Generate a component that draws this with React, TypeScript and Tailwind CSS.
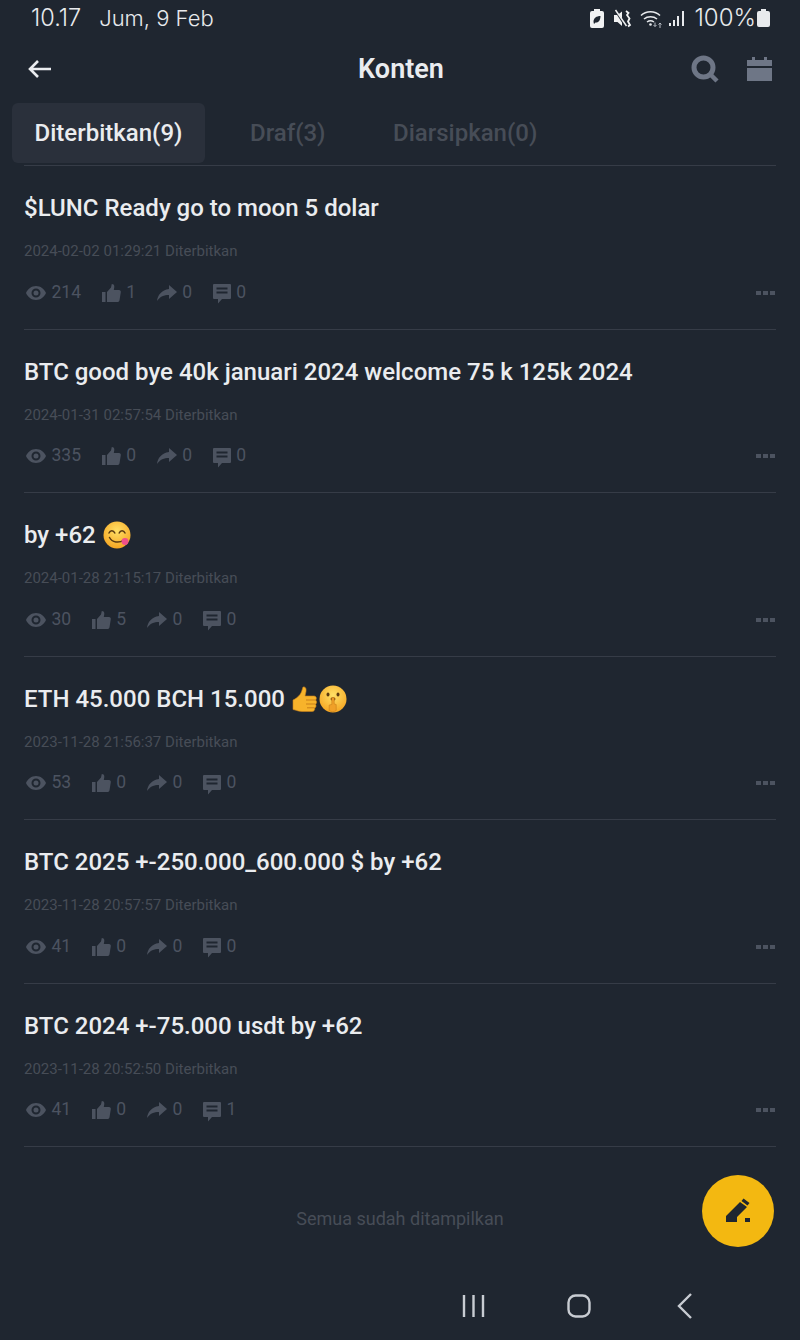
const posts = [
  { title: '$LUNC Ready go to moon 5 dolar', date: '2024-02-02 01:29:21', views: 214, likes: 1, shares: 0, comments: 0 },
  { title: 'BTC good bye 40k januari 2024 welcome 75 k 125k 2024', date: '2024-01-31 02:57:54', views: 335, likes: 0, shares: 0, comments: 0 },
  { title: 'by +62', emoji: 'yum', date: '2024-01-28 21:15:17', views: 30, likes: 5, shares: 0, comments: 0 },
  { title: 'ETH 45.000 BCH 15.000', emoji: 'thumb', date: '2023-11-28 21:56:37', views: 53, likes: 0, shares: 0, comments: 0 },
  { title: 'BTC 2025 +-250.000_600.000 $ by +62', date: '2023-11-28 20:57:57', views: 41, likes: 0, shares: 0, comments: 0 },
  { title: 'BTC 2024 +-75.000 usdt by +62', date: '2023-11-28 20:52:50', views: 41, likes: 0, shares: 0, comments: 1 },
]

function YumEmoji() {
  return (
    <svg width="28" height="28" viewBox="0 0 28 28">
      <defs>
        <radialGradient id="yumFace" cx="50%" cy="35%" r="65%">
          <stop offset="0%" stopColor="#ffe066" />
          <stop offset="100%" stopColor="#f5a623" />
        </radialGradient>
      </defs>
      <circle cx="14" cy="14" r="13.500" fill="url(#yumFace)" />
      <path d="M6 12c1.200-3 4.500-3 5.800 0M16.200 12c1.200-3 4.500-3 5.800 0" fill="none" stroke="#5b3a10" strokeWidth="1.500" strokeLinecap="round" />
      <path d="M6.500 16.500c2.500 5 9.500 6 14.500 2.500" fill="none" stroke="#5b3a10" strokeWidth="1.500" strokeLinecap="round" />
      <circle cx="22" cy="20.500" r="3.400" fill="#f0508a" />
    </svg>
  )
}

function ThumbEmoji() {
  return (
    <svg width="27" height="28" viewBox="0 0 27 28">
      <path d="M1 15c2.500-1 5-3 7-5.500 1.500-2 2-4.500 3-7.500 2.500-.5 3.500 1.500 3 4.500L13 11h9c2.500 0 3 3 1.500 4 1.500 1 1.500 3.500 0 4.200 1 1.300.6 3.400-.9 3.800.6 1.500-.4 3.500-2.600 3.500H10c-3 0-5-1-7-1.500L1 24.500z" fill="#f7b32b" stroke="#c9801a" strokeWidth=".6" />
      <path d="M14 15h9.500M14 19h9.500M15 22.800h7.500" stroke="#c9801a" strokeWidth="1" />
    </svg>
  )
}

function ShushEmoji() {
  return (
    <svg width="28" height="28" viewBox="0 0 28 28">
      <defs>
        <radialGradient id="shushFace" cx="50%" cy="35%" r="65%">
          <stop offset="0%" stopColor="#ffe066" />
          <stop offset="100%" stopColor="#f5a623" />
        </radialGradient>
      </defs>
      <circle cx="14" cy="14" r="13.500" fill="url(#shushFace)" />
      <ellipse cx="9" cy="9.500" rx="1.500" ry="2" fill="#5b3a10" />
      <ellipse cx="19" cy="9.500" rx="1.500" ry="2" fill="#5b3a10" />
      <ellipse cx="14" cy="14" rx="2.500" ry="1.800" fill="#7a3f12" />
      <path d="M12.800 13.500c0-1.300 2.400-1.300 2.400 0V19l2 .5V25.500c-2 1.500-5 1.500-7 0V20l2.600-.5z" fill="#f0a028" stroke="#c9801a" strokeWidth=".6" />
    </svg>
  )
}

function EyeIcon() {
  return (
    <svg width="20" height="14" viewBox="0 0 20 14" fill="#4c5360">
      <path fillRule="evenodd" d="M10 0c4.500 0 8.200 2.800 10 7-1.800 4.200-5.500 7-10 7S1.800 11.200 0 7c1.800-4.200 5.500-7 10-7zm0 2.500a4.500 4.500 0 100 9 4.500 4.500 0 000-9z" />
      <circle cx="10" cy="7" r="2.500" />
    </svg>
  )
}

function LikeIcon() {
  return (
    <svg width="19" height="18" viewBox="0 0 19 18" fill="#4c5360">
      <path d="M0 8h3.500v10H0zM5 8l4-4.500L9.800 0c1.800 0 2.700 1.200 2.500 3L11.800 6H17c1.300 0 2 1 1.800 2.200l-1.300 8c-.2 1-1 1.800-2 1.800H5z" />
    </svg>
  )
}

function ShareIcon() {
  return (
    <svg width="20" height="16" viewBox="0 0 20 16" fill="#4c5360">
      <path d="M12 0l8 7-8 7v-4C7 10 3 11.500 0 16c.8-6 4.500-11 12-12z" />
    </svg>
  )
}

function CommentIcon() {
  return (
    <svg width="18" height="20" viewBox="0 0 18 20" fill="#4c5360" className="mt-[3px]">
      <path fillRule="evenodd" d="M1 0h16a1 1 0 011 1v13a1 1 0 01-1 1H9l-4 4.500V15H1a1 1 0 01-1-1V1a1 1 0 011-1zm2.500 3.500v2h11v-2zm0 4v2h11v-2z" />
    </svg>
  )
}

function Stat({ icon, value }: { icon: React.ReactNode; value: number }) {
  return (
    <div className="flex items-center gap-[5.5px]">
      {icon}
      <span className="text-[17.5px] leading-none text-[#4c5360]">{value}</span>
    </div>
  )
}

function PostRow({ post }: { post: (typeof posts)[number] }) {
  return (
    <article className="h-[163.5px] border-b border-[#363c47] pt-[26px]">
      <div className="flex h-[32px] items-center text-[24px] font-medium leading-[32px] text-[#eaecef]">
        <span>{post.title}</span>
        {post.emoji === 'yum' && (
          <span className="ml-[7px] flex">
            <YumEmoji />
          </span>
        )}
        {post.emoji === 'thumb' && (
          <span className="ml-[7px] flex">
            <ThumbEmoji />
            <ShushEmoji />
          </span>
        )}
      </div>
      <p className="mt-[17px] text-[15px] leading-[20px] text-[#474d57]">{post.date} Diterbitkan</p>
      <div className="mt-[20.5px] flex h-[22px] items-center justify-between pl-[2px] pr-[1px]">
        <div className="flex items-center gap-[20.7px]">
          <Stat icon={<EyeIcon />} value={post.views} />
          <Stat icon={<LikeIcon />} value={post.likes} />
          <Stat icon={<ShareIcon />} value={post.shares} />
          <Stat icon={<CommentIcon />} value={post.comments} />
        </div>
        <div className="flex gap-[2px]">
          <span className="h-[4px] w-[5px] bg-[#4c5360]" />
          <span className="h-[4px] w-[5px] bg-[#4c5360]" />
          <span className="h-[4px] w-[5px] bg-[#4c5360]" />
        </div>
      </div>
    </article>
  )
}

export default function App() {
  return (
    <div className="relative h-[1340px] w-[800px] overflow-hidden bg-[#1f2630] font-['Roboto',sans-serif]">
      {/* status bar */}
      <div className="flex h-[36px] items-center justify-between pl-[31px] pr-[30px] leading-none text-[#e8eaed]">
        <div className="flex items-baseline gap-[18px] font-['Inter',sans-serif] font-light">
          <span className="text-[23.5px]">10.17</span>
          <span className="text-[22px]">Jum, 9 Feb</span>
        </div>
        <div className="flex items-center">
          <svg width="14" height="19" viewBox="0 0 14 19" className="mr-[10px]">
            <path d="M4 0h6v2h2a2 2 0 012 2v13a2 2 0 01-2 2H2a2 2 0 01-2-2V4a2 2 0 012-2h2z" fill="#f1f2f3" />
            <path d="M3.500 13c0-4 3-6 7-6 0 4-2 7-5 6.500L4 15z" fill="#1f2630" />
          </svg>
          <svg width="18" height="19" viewBox="0 0 18 19" className="mr-[8px]" fill="#f1f2f3">
            <path d="M0 6h3.500L8 2.500V17L3.500 13H0z" />
            <path d="M1 1l11 17" stroke="#1f2630" strokeWidth="2" />
            <path d="M1.500 1l11 16" stroke="#f1f2f3" strokeWidth="1.500" />
            <path d="M12 2l2.500 2-1.500 2 2.500 3.500-1.500 3 2 3.500-2 1.500" fill="none" stroke="#f1f2f3" strokeWidth="1.800" />
          </svg>
          <svg width="24" height="19" viewBox="0 0 24 19" className="mr-[5px]" fill="none" stroke="#e8eaed" strokeWidth="1.500">
            <path d="M1 6.500C6 1.500 15 1.500 20 6.500M4 10c3.500-3 9.500-3 13 0M7 13c2-1.500 5-1.500 7 0" />
            <circle cx="10.500" cy="15.500" r="1.300" fill="#e8eaed" stroke="none" />
            <path d="M15 13.500v4M13.500 16l1.500 1.500 1.500-1.500M20 19v-5M18.500 15.500L20 14l1.500 1.500" strokeWidth="1" stroke="#b7bcc4" />
          </svg>
          <svg width="16" height="17" viewBox="0 0 16 17" className="mr-[9px]" fill="#e8eaed">
            <rect x="0" y="13" width="2" height="3" />
            <rect x="4" y="10" width="2" height="6" />
            <rect x="8" y="6" width="2" height="10" />
            <rect x="13" y="1" width="2" height="15" />
          </svg>
          <span className="font-['Inter',sans-serif] text-[24px] font-light">100%</span>
          <svg width="13" height="18" viewBox="0 0 13 18" className="ml-[1px]" fill="#e8eaed">
            <path d="M4 0h5v2h2a2 2 0 012 2v12a2 2 0 01-2 2H2a2 2 0 01-2-2V4a2 2 0 012-2h2z" />
          </svg>
        </div>
      </div>

      {/* header */}
      <header className="mb-[2px] mt-[1px] flex h-[64px] items-center px-[27px]">
        <div className="flex-1">
          <svg width="24" height="20" viewBox="0 0 24 20" fill="none" stroke="#eaecef" strokeWidth="2.600">
            <path d="M24 10H3M11 2l-8 8 8 8" />
          </svg>
        </div>
        <h1 className="ml-[3px] text-[27px] font-semibold leading-none text-[#eaecef]">Konten</h1>
        <div className="flex flex-1 items-center justify-end gap-[28px] pr-[1px]">
          <svg width="28" height="28" viewBox="0 0 28 28" fill="none" stroke="#6e7686">
            <circle cx="12.500" cy="12.500" r="9.500" strokeWidth="5" />
            <path d="M19 19l7 7" strokeWidth="4.500" />
          </svg>
          <svg width="25" height="24" viewBox="0 0 25 24" fill="#6e7686">
            <path d="M5 0h3v3h9V0h3v3h5v6H0V3h5zM0 11h25v13H0z" />
          </svg>
        </div>
      </header>

      {/* tabs */}
      <nav className="mx-[12px] flex h-[60px] items-center text-[24px] font-medium leading-none">
        <span className="flex h-full w-[193px] items-center justify-center rounded-[6px] bg-[#2a303b] text-[#eaecef]">
          Diterbitkan(9)
        </span>
        <span className="ml-[45px] text-[#474d57]">Draf(3)</span>
        <span className="ml-[67.5px] text-[#474d57]">Diarsipkan(0)</span>
      </nav>

      {/* list */}
      <main className="mx-[24px] mt-[2px] border-t border-[#363c47]">
        {posts.map((post) => (
          <PostRow key={post.date} post={post} />
        ))}
        <p className="mt-[61px] text-center text-[18px] leading-[22px] text-[#474d57]">Semua sudah ditampilkan</p>
      </main>

      {/* floating compose button */}
      <button
        type="button"
        className="absolute left-[702px] top-[1175px] flex h-[72px] w-[72px] items-center justify-center rounded-full bg-[#f3b811]"
      >
        <svg width="26" height="26" viewBox="0 0 26 26" fill="#1f2630">
          <path d="M1 24v-6L15 4l7 5-10 10v5z" />
          <path d="M16.500 3l2-2.500 6 4.500-2 2.500z" />
          <rect x="20" y="20" width="5" height="4" />
        </svg>
      </button>

      {/* android nav */}
      <div className="absolute left-[462px] top-[1293px] flex items-center">
        <svg width="24" height="24" viewBox="0 0 24 24" stroke="#c8ccd2" strokeWidth="2.400">
          <path d="M2 1v22M11.500 1v22M21 1v22" />
        </svg>
        <svg width="24" height="24" viewBox="0 0 24 24" fill="none" stroke="#c8ccd2" strokeWidth="2.400" className="ml-[81px]">
          <rect x="1.500" y="1.500" width="21" height="21" rx="7" />
        </svg>
        <svg width="16" height="26" viewBox="0 0 16 26" fill="none" stroke="#c8ccd2" strokeWidth="2.400" className="ml-[86px]">
          <path d="M14 1L2 13l12 12" />
        </svg>
      </div>
    </div>
  )
}
